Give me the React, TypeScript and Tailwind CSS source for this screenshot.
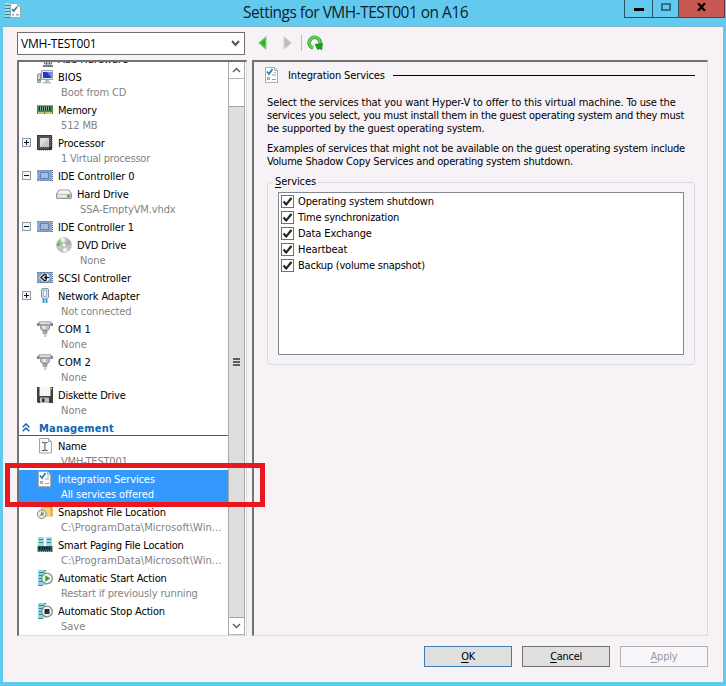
import { ReactNode, useState } from 'react';

interface TreeItem {
  label: string;
  detail?: string;
  icon: ReactNode;
  expander?: 'plus' | 'minus';
  child?: boolean;
  spacing?: string;
  detailSpacing?: string;
}

const SettingsIcon = () => (
  <svg width="16" height="16" viewBox="0 0 16 16">
    <path d="M1.500.500h9l3 3v12h-12z" fill="#fdfdfd" stroke="#a9adb2" />
    <path d="M10.500.500v3h3" fill="#e4e8ec" stroke="#a9adb2" />
    <path d="M3 4.500l2 2.500 3.500-5" fill="none" stroke="#2484c0" strokeWidth="1.800" />
    <path d="M8 8h4M8 12.500h4" stroke="#9aa1a9" />
    <path d="M3.500 10.500h2v2h-2z" fill="#fff" stroke="#8d949c" />
    <path d="M10 5.500h2" stroke="#aeb4bb" />
  </svg>
);

const AppIcon = () => (
  <svg width="18" height="17" viewBox="0 0 18 17">
    <path d="M1 1h7v14H1z" fill="#9fdde0" />
    <path d="M1 3.500h5M1 6.500h5M1 9.500h5M1 12.500h5" stroke="#2f8790" />
    <path d="M1 15.500h5" stroke="#5c7a80" />
    <path d="M6.500 1.500h7l3 3v11h-10z" fill="#fbfcfe" stroke="#a3a8b0" />
    <path d="M13.500 1.500v3h3" fill="#dfe4ea" stroke="#a3a8b0" />
    <path d="M8 7l1.700 2L13 5" fill="none" stroke="#2977b8" strokeWidth="1.500" />
    <path d="M8 12h2v1.500h-2zM12 12h3v1.500h-3z" fill="#a2a9b4" />
  </svg>
);

const HardwareIcon = () => (
  <svg width="16" height="16" viewBox="0 0 16 16">
    <path d="M7.500 5h7v8h-7z" fill="#d5d8da" stroke="#73787c" />
    <path d="M9.500 6v7M12.500 6v7" stroke="#63686c" />
    <path d="M6 15h10" stroke="#4b5054" strokeWidth="1.500" />
  </svg>
);

const BiosIcon = () => (
  <svg width="16" height="16" viewBox="0 0 16 16">
    <path d="M.500 5.500l3-1v9h-3z" fill="#d0d4d8" stroke="#8b9299" />
    <path d="M1 10h2v2H1z" fill="#4fb04c" />
    <path d="M4.500 1.500h11v9h-11z" fill="#e6e8ee" stroke="#9a9fae" />
    <path d="M6 3h8.500v6H6z" fill="#2138c4" />
    <path d="M10 3h4.500v6z" fill="#6c86ec" />
    <path d="M8 11h4v2h2v1.500H6V13h2z" fill="#b7bcc2" />
  </svg>
);

const MemoryIcon = () => (
  <svg width="16" height="16" viewBox="0 0 16 16">
    <path d="M0 3h16v9H0z" fill="#3f8f52" />
    <path d="M0 3h16v1H0z" fill="#6fb47c" />
    <path d="M2 4.500h11.500v4H2z" fill="#1c2a1f" />
    <path d="M3.500 4.500v4M5.500 4.500v4M7.500 4.500v4M9.500 4.500v4M11.500 4.500v4" stroke="#b9c8b4" strokeWidth=".8" />
    <path d="M1 10h6v2H1zM8 10h7v2H8z" fill="#cfc06a" />
  </svg>
);

const ProcessorIcon = () => (
  <svg width="16" height="16" viewBox="0 0 16 16">
    <path d="M15.500 2v12M2 15.500h12" stroke="#c9a566" strokeDasharray="1 1" />
    <path d="M0 0h15v15H0z" fill="#3c3a3a" />
    <path d="M1 1h13v13H1z" fill="#565352" />
    <path d="M3 3h9v9H3z" fill="#c4c4c4" />
    <path d="M3 12V3h9z" fill="#dcdcdc" />
    <path d="M12 12h2v2h-2z" fill="#2b2929" />
  </svg>
);

const ChipIcon = () => (
  <svg width="16" height="16" viewBox="0 0 16 16">
    <path d="M15.500 2v11" stroke="#4c6590" strokeDasharray="1 1" />
    <path d="M0 2h15v11H0z" fill="#8aa5ca" />
    <path d="M0 2.500h15M0 12.500h15" stroke="#6f8db8" strokeDasharray="2 1" />
    <path d="M3.500 4.500h8v6h-8z" fill="#a3bce0" stroke="#6583b0" />
    <path d="M.500 5v5" stroke="#b9cae2" strokeDasharray="1 1" />
  </svg>
);

const HardDriveIcon = () => (
  <svg width="16" height="16" viewBox="0 0 16 16">
    <path d="M3 4h10l2.500 4v3.500q0 1-1 1h-13q-1 0-1-1V8z" fill="#c5c6c8" stroke="#808285" strokeWidth=".8" />
    <path d="M3.500 4.500h9l2 3.200h-13z" fill="#f4f4f5" />
    <path d="M1.500 9h9v2.500h-9z" fill="#e7e7e8" />
    <path d="M11.500 8.500h2v3h-2z" fill="#41a038" />
  </svg>
);

const DvdIcon = () => (
  <svg width="16" height="16" viewBox="0 0 16 16">
    <circle cx="8" cy="8" r="7.300" fill="#c6c6c8" stroke="#9b9b9d" strokeWidth=".7" />
    <path d="M8 8L4 1.900A7 7 0 0 1 9 1z" fill="#f0f0f0" />
    <path d="M8 8l4 6.100A7 7 0 0 1 7 15z" fill="#efefef" />
    <path d="M8 8L1 6.500A7 7 0 0 1 4 2.200z" fill="#9dc78e" />
    <path d="M8 8l7-.500A7 7 0 0 0 12.500 2.500z" fill="#aaaaad" />
    <circle cx="8" cy="8" r="2.300" fill="#e8e8e8" stroke="#98989a" strokeWidth=".7" />
    <circle cx="8" cy="8" r=".9" fill="#fff" />
    <path d="M1 6h3v3H1z" fill="#6cb74f" />
  </svg>
);

const ScsiIcon = () => (
  <svg width="16" height="16" viewBox="0 0 16 16">
    <path d="M15.500 2v11" stroke="#4c6590" strokeDasharray="1 1" />
    <path d="M0 2h15v11H0z" fill="#88a2c6" />
    <path d="M0 2.500h15M0 12.500h15" stroke="#5c7ba8" strokeDasharray="2 1" />
    <path d="M2 7.500L6 3.500h4l3.500 4-3.500 4H6z" fill="#fff" />
    <path d="M9.500 5L7.500 4.300 4 7.500l3.500 3.200 2-.7" fill="none" stroke="#15181d" strokeWidth="1.400" />
    <path d="M6.500 7.500L10 5v5z" fill="#15181d" />
    <path d="M9 7.500h3.500" stroke="#15181d" strokeWidth="1.300" />
  </svg>
);

const NetworkIcon = () => (
  <svg width="16" height="16" viewBox="0 0 16 16">
    <path d="M4.500 2q0-1.500 1.500-1.500h4q1.500 0 1.500 1.500v7.500l-1.500 1.500h-4l-1.500-1.500z" fill="#d3e2f2" stroke="#7f93ab" />
    <path d="M6.500 2.500h3v6h-3z" fill="#f4f8fc" stroke="#8aa0bb" strokeWidth=".8" />
    <path d="M6.500 11v4M9.500 11v4" stroke="#2c8fba" strokeWidth="1.700" />
    <path d="M8 11v3" stroke="#8ed0e6" />
  </svg>
);

const ComIcon = () => (
  <svg width="16" height="16" viewBox="0 0 16 16">
    <path d="M2 .8h12v3H2z" fill="#e3e5e6" stroke="#888e92" strokeWidth=".8" />
    <path d="M0 2h2.500v3H0zM13.500 2H16v3h-2.500z" fill="#7f868a" />
    <path d="M3 4h10l-1 4.500-2 1H6l-2-1z" fill="#b9bec1" stroke="#7b8286" strokeWidth=".8" />
    <path d="M5 5h4l-.500 3H6z" fill="#e5e8ea" />
    <path d="M6 9.500h4v3H6z" fill="#a4aaae" stroke="#7b8286" strokeWidth=".6" />
    <path d="M7 12.500h2.500V16H7z" fill="#c0cad0" />
  </svg>
);

const DisketteIcon = () => (
  <svg width="16" height="16" viewBox="0 0 16 16">
    <path d="M0 0h16v16H1l-1-1z" fill="#403e40" />
    <path d="M2.500 0h11v9h-11z" fill="#f5f6f7" />
    <path d="M3 10.500h9V16H3z" fill="#b9bbbd" />
    <path d="M5 11.500h2.500V15H5z" fill="#333" />
    <path d="M14 1h1v1.500h-1z" fill="#ddd" />
  </svg>
);

const NameIcon = () => (
  <svg width="16" height="16" viewBox="0 0 16 16">
    <path d="M2.500.500h9l3 3v11.500h-12z" fill="#fafafa" stroke="#a2a2a2" />
    <path d="M11.500.500v3h3" fill="#ddd" stroke="#a2a2a2" />
    <path d="M5 4.500h2l1 .6 1-.6h1.500M5 12.500h2l1-.6 1 .6h1.500M7.900 5v7" fill="none" stroke="#4f4f4f" />
  </svg>
);

const SnapshotIcon = () => (
  <svg width="16" height="16" viewBox="0 0 16 16">
    <path d="M4 2h5l1-1.500h5.500v12H4z" fill="#e9bf62" />
    <path d="M5 4h10.500v8.500H5z" fill="#f3d485" />
    <path d="M13 2.500h2.500v10H14z" fill="#d9a642" />
    <circle cx="4.800" cy="10.200" r="4.300" fill="#f0f2f2" stroke="#7a8084" />
    <path d="M4.800 7.500v3l-2 1" fill="none" stroke="#b93a2e" />
    <path d="M5 10.200l2-1.500M5 11h2" stroke="#3b8a4a" />
  </svg>
);

const PagingIcon = () => (
  <svg width="16" height="16" viewBox="0 0 16 16">
    <path d="M1 0h6v9H1zM9 0h6v9H9z" fill="#9ddbe0" />
    <path d="M2 2.500h4M2 5.500h4M10 2.500h4M10 5.500h4" stroke="#2e858f" />
    <path d="M.500 9h15v6H.500z" fill="#2c5b5e" />
    <path d="M2.500 10v2.500M5 10v2.500M7.500 10v2.500M10 10v2.500M12.500 10v2.500" stroke="#071f22" strokeWidth="1.300" />
    <path d="M1 14.500h14" stroke="#8fc4bb" strokeDasharray="1 1" />
  </svg>
);

const ServerBody = () => (
  <>
    <path d="M1 0h8v15H1z" fill="#93d8de" />
    <path d="M2 2.500h5M2 5.500h4M2 8.500h3M2 11.500h4" stroke="#25818b" />
    <path d="M1 15.500h5M7 .500h2" stroke="#4b8187" />
  </>
);

const StartActionIcon = () => (
  <svg width="16" height="16" viewBox="0 0 16 16">
    <ServerBody />
    <circle cx="10" cy="8.500" r="5.300" fill="#f2f3f3" stroke="#858c8f" strokeWidth="1.300" />
    <path d="M8.200 5.300v6.400l5-3.200z" fill="#2fa52a" />
  </svg>
);

const StopActionIcon = () => (
  <svg width="16" height="16" viewBox="0 0 16 16">
    <ServerBody />
    <circle cx="10" cy="8.500" r="5.300" fill="#f2f3f3" stroke="#858c8f" strokeWidth="1.300" />
    <path d="M7.500 6h5v5h-5z" fill="#2e2e2e" />
  </svg>
);

const hardware: TreeItem[] = [
  { label: 'Add Hardware', icon: <HardwareIcon /> },
  { label: 'BIOS', detail: 'Boot from CD', icon: <BiosIcon />, detailSpacing: 'tracking-[-0.1px]' },
  { label: 'Memory', detail: '512 MB', icon: <MemoryIcon />, spacing: 'tracking-[-0.25px]', detailSpacing: 'tracking-[-0.15px]' },
  { label: 'Processor', detail: '1 Virtual processor', icon: <ProcessorIcon />, expander: 'plus', spacing: 'tracking-[-0.1px]', detailSpacing: 'tracking-[-0.21px]' },
  { label: 'IDE Controller 0', icon: <ChipIcon />, expander: 'minus', spacing: 'tracking-[-0.1px]' },
  { label: 'Hard Drive', detail: 'SSA-EmptyVM.vhdx', icon: <HardDriveIcon />, child: true, spacing: 'tracking-[-0.15px]', detailSpacing: 'tracking-[-0.12px]' },
  { label: 'IDE Controller 1', icon: <ChipIcon />, expander: 'minus', spacing: 'tracking-[-0.14px]' },
  { label: 'DVD Drive', detail: 'None', icon: <DvdIcon />, child: true, spacing: 'tracking-[-0.25px]', detailSpacing: 'tracking-[-0.1px]' },
  { label: 'SCSI Controller', icon: <ScsiIcon />, spacing: 'tracking-[-0.08px]' },
  { label: 'Network Adapter', detail: 'Not connected', icon: <NetworkIcon />, expander: 'plus', spacing: 'tracking-[-0.13px]', detailSpacing: 'tracking-[-0.15px]' },
  { label: 'COM 1', detail: 'None', icon: <ComIcon /> },
  { label: 'COM 2', detail: 'None', icon: <ComIcon /> },
  { label: 'Diskette Drive', detail: 'None', icon: <DisketteIcon />, spacing: 'tracking-[-0.2px]' },
];

const management: TreeItem[] = [
  { label: 'Name', detail: 'VMH-TEST001', icon: <NameIcon />, spacing: 'tracking-[-0.2px]', detailSpacing: 'tracking-[-0.2px]' },
  { label: 'Integration Services', detail: 'All services offered', icon: <SettingsIcon />, spacing: 'tracking-[-0.13px]', detailSpacing: 'tracking-[-0.08px]' },
  { label: 'Snapshot File Location', detail: 'C:\\ProgramData\\Microsoft\\Win...', icon: <SnapshotIcon />, spacing: 'tracking-[-0.14px]', detailSpacing: 'tracking-[0.06px]' },
  { label: 'Smart Paging File Location', detail: 'C:\\ProgramData\\Microsoft\\Win...', icon: <PagingIcon />, spacing: 'tracking-[-0.2px]', detailSpacing: 'tracking-[0.06px]' },
  { label: 'Automatic Start Action', detail: 'Restart if previously running', icon: <StartActionIcon />, spacing: 'tracking-[-0.16px]', detailSpacing: 'tracking-[-0.12px]' },
  { label: 'Automatic Stop Action', detail: 'Save', icon: <StopActionIcon />, spacing: 'tracking-[-0.17px]' },
];

const services = [
  { name: 'Operating system shutdown', spacing: 'tracking-[-0.16px]' },
  { name: 'Time synchronization', spacing: 'tracking-[-0.22px]' },
  { name: 'Data Exchange', spacing: 'tracking-[-0.1px]' },
  { name: 'Heartbeat', spacing: 'tracking-[-0.05px]' },
  { name: 'Backup (volume snapshot)', spacing: 'tracking-[-0.22px]' },
];

function Expander({ kind }: { kind: 'plus' | 'minus' }) {
  return (
    <svg width="9" height="9" viewBox="0 0 9 9" shapeRendering="crispEdges">
      <path d="M.500.500h8v8h-8z" fill="#f3f4f6" stroke="#8e9aa8" />
      <path d={kind === 'plus' ? 'M2 4.500h5M4.500 2v5' : 'M2 4.500h5'} stroke="#0c1420" />
    </svg>
  );
}

function TreeRow({ item, selected, onSelect }: { item: TreeItem; selected: boolean; onSelect: () => void }) {
  return (
    <div
      onClick={onSelect}
      className={`flex shrink-0 ${item.detail ? 'h-[33px]' : 'h-[18px]'} ${selected ? 'bg-[#3399ff] text-white' : 'text-black'}`}
    >
      <div className={`flex h-[17px] shrink-0 items-center pl-[3px] ${item.child ? 'w-[37px]' : 'w-[18px]'}`}>
        {item.expander && <Expander kind={item.expander} />}
      </div>
      <div className="flex h-[18px] w-[21px] shrink-0 items-center">{item.icon}</div>
      <div className="min-w-0 whitespace-nowrap">
        <div className={`h-[17px] leading-[20px] ${item.spacing ?? ''}`}>{item.label}</div>
        {item.detail && (
          <div className={`h-[15px] pl-[3px] leading-[15px] ${item.detailSpacing ?? ''} ${selected ? 'text-white' : 'text-[#838383]'}`}>
            {item.detail}
          </div>
        )}
      </div>
    </div>
  );
}

function ScrollBar() {
  return (
    <div className="mr-px flex w-[17px] shrink-0 flex-col border-x border-[#a9a9a9] bg-white">
      <div className="flex h-[17px] items-center justify-center border-b border-[#b5b5b5]">
        <svg width="9" height="6" viewBox="0 0 9 6">
          <path d="M1 5l3.500-3.500L8 5" fill="none" stroke="#606060" strokeWidth="1.500" />
        </svg>
      </div>
      <div className="h-[27px]" />
      <div className="flex flex-1 flex-col items-center justify-center gap-px border-y border-[#a3a3a3] bg-[#dedede]">
        <div className="h-0.5 w-[7px] bg-[#606060]" />
        <div className="h-0.5 w-[7px] bg-[#606060]" />
        <div className="h-0.5 w-[7px] bg-[#606060]" />
      </div>
      <div className="flex h-[17px] items-center justify-center border-b border-[#b5b5b5]">
        <svg width="9" height="6" viewBox="0 0 9 6">
          <path d="M1 1l3.500 3.500L8 1" fill="none" stroke="#606060" strokeWidth="1.500" />
        </svg>
      </div>
    </div>
  );
}

function TitleBar() {
  return (
    <div className="flex h-[26px] shrink-0 items-start">
      <div className="w-[243px] pt-[2px] pl-[4px]">
        <AppIcon />
      </div>
      <div className="flex-1 whitespace-nowrap pt-px font-['Open_Sans',sans-serif] text-[15.5px] leading-[22px] tracking-[-0.52px] text-[#10202a]">
        Settings for VMH-TEST001 on A16
      </div>
      <div className="mr-px flex h-[18px] border-b border-l border-[#2a5264]">
        <button className="flex w-[28px] items-center justify-center border-r border-[#2a5264]">
          <span className="mt-px h-[3px] w-[10px] bg-black" />
        </button>
        <button className="flex w-[26px] items-center justify-center border-r border-[#2a5264]">
          <span className="mb-[3px] h-[8px] w-[10px] border-2 border-[#2f7088]" />
        </button>
        <button className="flex w-[46px] items-center justify-center border-r border-[#6b3434] bg-[#c75750]">
          <svg width="9" height="8" viewBox="0 0 9 8" className="mb-[3px]">
            <path d="M1 0l7 8M8 0L1 8" stroke="#000" strokeWidth="2.200" />
          </svg>
        </button>
      </div>
    </div>
  );
}

export default function App() {
  const [selected, setSelected] = useState('Integration Services');
  const [checked, setChecked] = useState<string[]>(services.map((s) => s.name));

  const toggle = (name: string) => {
    setChecked(checked.includes(name) ? checked.filter((s) => s !== name) : [...checked, name]);
  };

  return (
    <div className="relative flex h-[686px] w-[726px] flex-col overflow-hidden bg-[#63caef] font-['DejaVu_Sans_Condensed','DejaVu_Sans',sans-serif] text-[11px] font-normal text-black">
      <TitleBar />
      <div className="mx-[3px] mb-1 flex flex-1 flex-col border-t border-[#7fb3c8] bg-[#f6f2f6]">
        <div className="flex h-[33px] shrink-0 items-start pt-[5px] pl-[14px]">
          <div className="flex h-[23px] w-[228px] items-center justify-between border border-[#6f6f6f] bg-white pr-1 pl-[3px] font-['Open_Sans',sans-serif] text-[12px] tracking-[-0.2px]">
            <span>VMH-TEST001</span>
            <svg width="9" height="7" viewBox="0 0 9 7">
              <path d="M1 1l3.500 4L8 1" fill="none" stroke="#555" strokeWidth="2" />
            </svg>
          </div>
          <div className="flex h-[22px] items-center pl-[13px]">
            <svg width="9" height="14" viewBox="0 0 9 14">
              <path d="M8 .800v12.400L.700 7z" fill="#4cc53f" stroke="#7bcf74" />
              <path d="M7 3v8L2.500 7z" fill="#2fae28" />
            </svg>
            <svg width="9" height="14" viewBox="0 0 9 14" className="ml-4">
              <path d="M1 .800v12.400L8.300 7z" fill="#bcbcbe" stroke="#d0d0d2" />
            </svg>
            <div className="ml-[9px] h-4 w-px bg-[#b9b9bd]" />
            <svg width="17" height="16" viewBox="0 0 17 16" className="ml-[5px]">
              <path d="M6 13A5.500 5.500 0 1 1 13 9" fill="none" stroke="#2f9e2c" strokeWidth="3.600" />
              <path d="M6 12.800A5.400 5.400 0 1 1 12.800 9" fill="none" stroke="#5fd254" strokeWidth="2.200" />
              <path d="M7.500 9l8.500-1-1 7.200-2.500-1.200-2 1z" fill="#249a22" />
            </svg>
          </div>
        </div>

        <div className="flex h-[576px] shrink-0 pl-[14px]">
          <div className="flex w-[230px] border-t-2 border-r border-b border-l-2 border-t-[#727272] border-r-[#dedede] border-b-[#dedede] border-l-[#727272] bg-white">
            <div className="flex min-w-0 flex-1 flex-col overflow-hidden">
              <div className="-mt-3 flex flex-col">
                {hardware.map((item) => (
                  <TreeRow key={item.label} item={item} selected={selected === item.label} onSelect={() => setSelected(item.label)} />
                ))}
                <div className="mb-px flex h-[17px] shrink-0 items-center border-b border-[#1a6a9c] pl-[3px] text-[#0b66b5]">
                  <svg width="8" height="9" viewBox="0 0 8 9">
                    <path d="M.700 4.300L4 1l3.300 3.300M.700 8.300L4 5l3.300 3.300" fill="none" stroke="#0b66b5" strokeWidth="1.500" />
                  </svg>
                  <span className="pt-[3px] pl-[9px] leading-[13px] font-bold tracking-[0.2px]">Management</span>
                </div>
                {management.map((item) => (
                  <TreeRow key={item.label} item={item} selected={selected === item.label} onSelect={() => setSelected(item.label)} />
                ))}
              </div>
            </div>
            <ScrollBar />
          </div>

          <div className="ml-[5px] flex w-[456px] flex-col border-t-2 border-r border-b border-l-2 border-t-[#727272] border-r-[#dcdade] border-b-[#dcdade] border-l-[#727272] pr-[12px] pl-[13px]">
            <div className="flex h-[26px] items-center">
              <div className="-ml-[3px] w-[24px]">
                <SettingsIcon />
              </div>
              <span className="w-[105px] whitespace-nowrap pt-[2px] tracking-[-0.13px]">Integration Services</span>
              <div className="h-px flex-1 bg-black" />
            </div>
            <p className="mt-[8px] whitespace-nowrap leading-[13px]">
              <span className="tracking-[-0.11px]">Select the services that you want Hyper-V to offer to this virtual machine. To use the</span>
              <br />
              <span className="tracking-[-0.22px]">services you select, you must install them in the guest operating system and they must</span>
              <br />
              <span className="tracking-[-0.16px]">be supported by the guest operating system.</span>
            </p>
            <p className="mt-[7px] whitespace-nowrap leading-[13px]">
              <span className="tracking-[-0.22px]">Examples of services that might not be available on the guest operating system include</span>
              <br />
              <span className="tracking-[-0.21px]">Volume Shadow Copy Services and operating system shutdown.</span>
            </p>
            <fieldset className="mt-[7px] h-[190px] rounded-[3px] border border-[#d5d9e2] px-[10px]">
              <legend className="-ml-[5px] px-[2px] leading-[14px] tracking-[-0.1px]">
                <span className="underline underline-offset-2">S</span>ervices
              </legend>
              <div className="mt-[3px] flex h-[163px] flex-col border border-[#828790] bg-white pt-px pl-[2px]">
                {services.map(({ name, spacing }) => (
                  <div key={name} onClick={() => toggle(name)} className="flex h-4 items-start">
                    <span className="mt-px flex size-[13px] items-center justify-center border border-[#707070] bg-white">
                      {checked.includes(name) && (
                        <svg width="11" height="11" viewBox="0 0 11 11">
                          <path d="M1.500 5.500l2.700 3L9.500 2" fill="none" stroke="#212121" strokeWidth="2.100" />
                        </svg>
                      )}
                    </span>
                    <span className={`pl-1 leading-[16px] ${spacing}`}>{name}</span>
                  </div>
                ))}
              </div>
            </fieldset>
          </div>
        </div>

        <div className="flex gap-[10px] pt-[10px] pl-[421px]">
          <button className="h-[21px] w-[88px] border border-[#3f7fb5] bg-[#dfdfdf] pt-[2px] tracking-[-0.3px]">
            <span className="underline underline-offset-2">O</span>K
          </button>
          <button className="h-[21px] w-[88px] border border-[#707070] bg-[#dfdfdf] pt-[2px] tracking-[-0.3px]">
            <span className="underline underline-offset-2">C</span>ancel
          </button>
          <button className="h-[21px] w-[88px] border border-[#b3b1b5] bg-[#f7f6f8] pt-[2px] tracking-[-0.2px] text-[#9b999d]" disabled>
            <span className="underline underline-offset-2">A</span>pply
          </button>
        </div>
      </div>

      {/* highlight around the selected entry */}
      <div className="pointer-events-none absolute top-[463px] left-[5px] h-[44px] w-[260px] border-5 border-[#e9181f]" />
    </div>
  );
}
